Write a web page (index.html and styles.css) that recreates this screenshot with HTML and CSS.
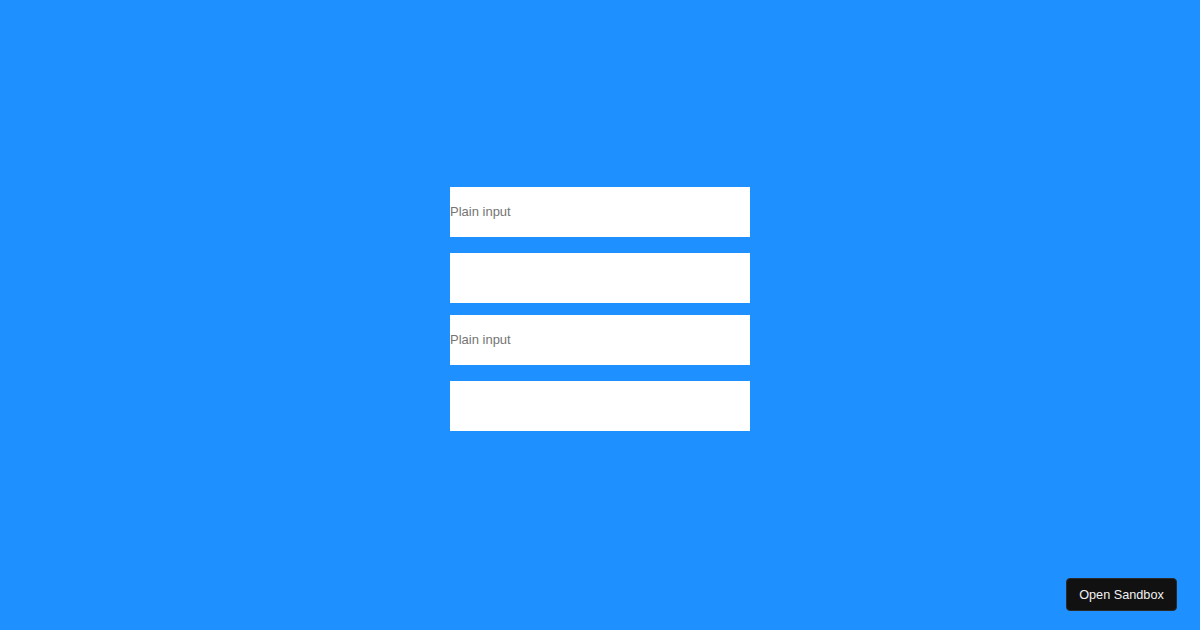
FILE: index.html
```html
<!DOCTYPE html>
<html>
<head>
<meta charset="utf-8">
<link rel="stylesheet" href="styles.css">
</head>
<body>
<main class="stage">
  <div class="fields">
    <div class="group">
      <input class="field" type="text" placeholder="Plain input">
      <div class="field blank"></div>
    </div>
    <div class="group">
      <input class="field" type="text" placeholder="Plain input">
      <div class="field blank"></div>
    </div>
  </div>
</main>
<button class="sandbox">Open Sandbox</button>
</body>
</html>
```

FILE: styles.css
```css
html, body {
  margin: 0;
  height: 100%;
}
body {
  background: #1e90ff;
  font-family: "Liberation Sans", Arial, sans-serif;
}
.stage {
  height: 100%;
  box-sizing: border-box;
  padding-bottom: 12px;
  display: flex;
  align-items: center;
  justify-content: center;
}
.fields {
  display: flex;
  flex-direction: column;
  gap: 12px;
  width: 300px;
}
.group {
  display: flex;
  flex-direction: column;
  gap: 16px;
}
.field {
  display: block;
  box-sizing: border-box;
  width: 300px;
  height: 50px;
  margin: 0;
  padding: 0 0 2px;
  border: none;
  outline: none;
  background: #fff;
  font-family: "Liberation Sans", Arial, sans-serif;
  font-size: 13px;
  color: #333;
}
.field::placeholder {
  color: #757575;
}
.sandbox {
  position: fixed;
  right: 23px;
  bottom: 19px;
  height: 33px;
  width: 111px;
  padding: 0;
  border: 1px solid #2a2a2a;
  border-radius: 4px;
  background: #111;
  color: #f2f2f2;
  font-family: "Liberation Sans", Arial, sans-serif;
  font-size: 12.7px;
}
```
